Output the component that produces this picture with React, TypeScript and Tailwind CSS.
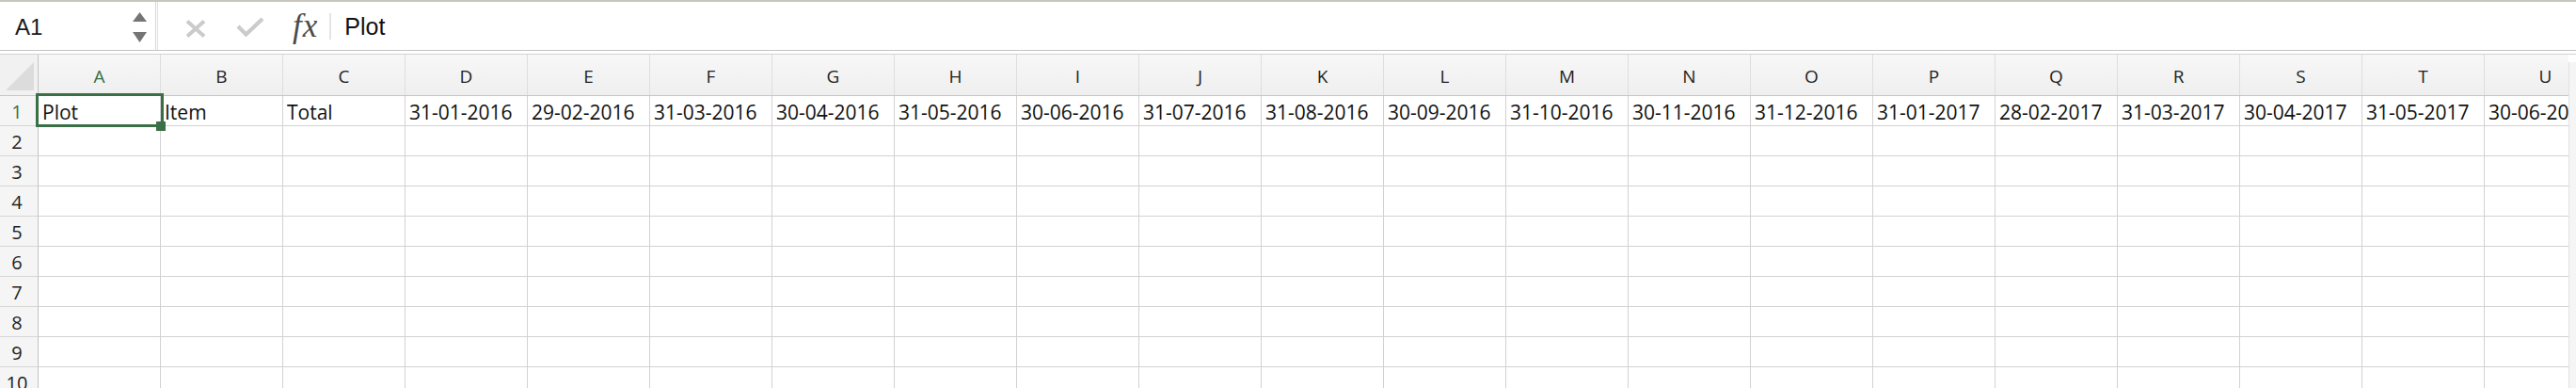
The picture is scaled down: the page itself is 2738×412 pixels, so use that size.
import { useMemo } from "react";

const COLUMNS = "ABCDEFGHIJKLMNOPQRSTU".split("");

const FIRST_ROW = [
  "Plot",
  "Item",
  "Total",
  "31-01-2016",
  "29-02-2016",
  "31-03-2016",
  "30-04-2016",
  "31-05-2016",
  "30-06-2016",
  "31-07-2016",
  "31-08-2016",
  "30-09-2016",
  "31-10-2016",
  "30-11-2016",
  "31-12-2016",
  "31-01-2017",
  "28-02-2017",
  "31-03-2017",
  "30-04-2017",
  "31-05-2017",
  "30-06-2017",
];

const ROW_COUNT = 10;

const cellFont = { fontFamily: '"Open Sans", "Noto Sans", sans-serif' };
const uiFont = { fontFamily: '"Liberation Sans", Arial, sans-serif' };

const FormulaBar = () => (
  <div className="flex h-[52px] shrink-0 border-b border-[#c4c4c4] bg-white" style={uiFont}>
    {/* Name box */}
    <div className="flex w-[166px] shrink-0 items-center justify-between border-r border-[#d6d6d6] pl-[16px] pr-[9px]">
      <span className="pt-[2px] text-[24px] leading-none text-[#1a1a1a]">A1</span>
      <div className="flex flex-col items-center gap-[11px] pt-[2px]">
        <svg width="15" height="10" viewBox="0 0 15 10">
          <polygon points="7.5,0 15,10 0,10" fill="#757575" />
        </svg>
        <svg width="15" height="11" viewBox="0 0 15 11">
          <polygon points="0,0 15,0 7.5,11" fill="#757575" />
        </svg>
      </div>
    </div>
    <div className="ml-[1px] w-px shrink-0 bg-[#e2e2e2]" />

    {/* Cancel / enter / fx */}
    <div className="flex items-center pl-[29px]">
      <svg width="22" height="19" viewBox="0 0 22 19" className="mt-[5px]">
        <path d="M2 1.5 L20 17.5 M20 1.5 L2 17.5" stroke="#cbcbcb" strokeWidth="4" strokeLinecap="butt" />
      </svg>
      <svg width="30" height="21" viewBox="0 0 30 21" className="ml-[32px] mt-[2px]">
        <path d="M2 10 L10.5 18.5 L28 2" stroke="#cbcbcb" strokeWidth="4.2" fill="none" />
      </svg>
      <span
        className="ml-[30px] text-[35px] italic leading-none tracking-[1px] text-[#4b4b4b]"
        style={{ fontFamily: '"Liberation Serif", "Times New Roman", serif' }}
      >
        fx
      </span>
      <div className="ml-[12px] h-[28px] w-[2px] bg-[#e4e4e4]" />
      <span className="ml-[14px] pt-[2px] text-[25px] leading-none text-[#111]">Plot</span>
    </div>
  </div>
);

const HeaderRow = () => (
  <div className="flex h-[44px] shrink-0 border-b border-[#c6c6c6] bg-gradient-to-b from-[#f7f7f7] to-[#efefef]">
    <div className="relative w-[41px] shrink-0 border-r border-[#c3c3c3] bg-[#f1f1f1]">
      <svg width="31" height="31" viewBox="0 0 31 31" className="absolute left-[6px] top-[8px]">
        <polygon points="0,30 30,30 30,0" fill="#dcdcdc" />
      </svg>
    </div>
    {COLUMNS.map((col) => (
      <div
        key={col}
        className={`flex w-[130px] shrink-0 items-center justify-center border-r border-[#dedede] pt-[3px] text-[19px] ${
          col === "A" ? "text-[#3a6f47]" : "text-[#1f1f1f]"
        }`}
        style={cellFont}
      >
        {col}
      </div>
    ))}
  </div>
);

const SheetRow = ({ index }: { index: number }) => {
  const isFirst = index === 1;
  return (
    <div className="flex h-[32px] shrink-0">
      <div
        className={`flex w-[41px] shrink-0 items-center justify-center border-r border-b border-r-[#c3c3c3] border-b-[#d6d6d6] bg-[#f5f5f5] pr-[4px] pt-[3px] text-[20px] ${
          isFirst ? "text-[#3a6f47]" : "text-[#1f1f1f]"
        }`}
        style={cellFont}
      >
        {index}
      </div>
      {COLUMNS.map((col, i) => (
        <div
          key={col}
          className="relative w-[130px] shrink-0 border-r border-b border-[#d2d2d2] bg-white"
        >
          {isFirst && (
            <div
              className="h-full overflow-hidden whitespace-nowrap pl-[4px] text-[21px] leading-[34px] text-[#111]"
              style={cellFont}
            >
              {FIRST_ROW[i]}
            </div>
          )}
          {isFirst && i === 0 && (
            <>
              <div className="pointer-events-none absolute left-[-3px] top-[-3px] z-10 h-[36px] w-[136px] border-[3px] border-[#3a6f47]" />
              <div className="absolute left-[125px] top-[27px] z-20 h-[10px] w-[10px] bg-[#3a6f47]" />
            </>
          )}
        </div>
      ))}
    </div>
  );
};

export default function App() {
  const rows = useMemo(() => Array.from({ length: ROW_COUNT }, (_, i) => i + 1), []);

  return (
    <div className="flex h-[412px] w-[2738px] flex-col overflow-hidden bg-white">
      <div className="h-[2px] shrink-0 bg-[#c9c6be]" />
      <FormulaBar />
      <div className="h-[3px] shrink-0 bg-white" />
      <div className="h-px shrink-0 bg-[#d2d2d2]" />

      {/* Grid + vertical scrollbar */}
      <div className="flex min-h-0 flex-1">
        <div className="flex min-w-0 flex-1 flex-col overflow-hidden">
          <HeaderRow />
          {rows.map((r) => (
            <SheetRow key={r} index={r} />
          ))}
        </div>
        <div className="mt-[8px] w-[8px] shrink-0 border-l border-[#e2e2e2] bg-[#f5f5f5]" />
      </div>
    </div>
  );
}
